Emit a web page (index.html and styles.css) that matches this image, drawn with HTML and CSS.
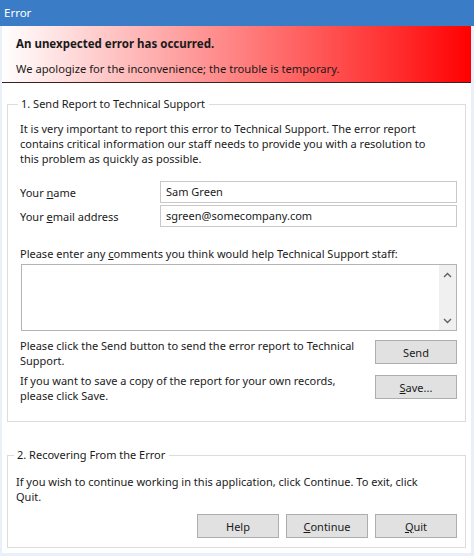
FILE: index.html
```html
<!DOCTYPE html>
<html lang="en">
<head>
    <meta charset="UTF-8">
    <meta name="viewport" content="width=device-width, initial-scale=1.0">
    <title>Error</title>
    <link rel="stylesheet" href="styles.css">
</head>
<body>

    <div class="window">
        <div class="titlebar">Error</div>

        <div class="banner">
            <div class="banner-title">An unexpected error has occurred.</div>
            <div class="banner-text">We apologize for the inconvenience; the trouble is temporary.</div>
        </div>

        <!-- 1. send report -->
        <fieldset class="group group-send">
            <legend>1. Send Report to Technical Support</legend>
            <p class="intro">It is very important to report this error to Technical Support. The error report contains critical information our staff needs to provide you with a resolution to this problem as quickly as possible.</p>

            <div class="field">
                <label>Your <u>n</u>ame</label>
                <div class="input">Sam Green</div>
            </div>
            <div class="field">
                <label>Your <u>e</u>mail address</label>
                <div class="input">sgreen@somecompany.com</div>
            </div>

            <div class="comments-label">Please enter any <u>c</u>omments you think would help Technical Support staff:</div>
            <div class="comments">
                <div class="comments-area"></div>
                <div class="scrollbar">
                    <svg width="9" height="6" viewBox="0 0 9 6"><path d="M1 5 L4.5 1.5 L8 5" fill="none" stroke="#606060" stroke-width="1.4"/></svg>
                    <svg width="9" height="6" viewBox="0 0 9 6"><path d="M1 1 L4.5 4.5 L8 1" fill="none" stroke="#606060" stroke-width="1.4"/></svg>
                </div>
            </div>

            <div class="action">
                <p>Please click the Send button to send the error report to Technical Support.</p>
                <button type="button">Send</button>
            </div>
            <div class="action">
                <p>If you want to save a copy of the report for your own records, please click Save.</p>
                <button type="button"><u>S</u>ave...</button>
            </div>
        </fieldset>

        <!-- 2. recovering -->
        <fieldset class="group group-recover">
            <legend>2. Recovering From the Error</legend>
            <p class="intro">If you wish to continue working in this application, click Continue. To exit, click Quit.</p>
            <div class="buttons">
                <button type="button">Help</button>
                <button type="button"><u>C</u>ontinue</button>
                <button type="button"><u>Q</u>uit</button>
            </div>
        </fieldset>
    </div>

</body>
</html>
```

FILE: styles.css
```css
body {
    font-family: "Noto Sans", "Open Sans", sans-serif;
    font-size: 11px;
    color: #1a1a1a;
    background-color: #ffffff;
    margin: 0;
    padding: 0;
}

.window {
    height: 556px;
    box-sizing: border-box;
    border-left: 2px solid #e9f0f9;
    border-right: 3px solid #e9f0f9;
    border-bottom: 3px solid #e9f0f9;
}

.titlebar {
    height: 26px;
    line-height: 26px;
    background-color: #3b7cc6;
    color: white;
    padding-left: 4px;
    margin: 0 -3px 0 -2px;
    font-size: 11.5px;
}

.banner {
    height: 57px;
    box-sizing: border-box;
    padding: 9px 14px 0;
    background: linear-gradient(to right, #ffffff, #ff2b2b 85%, #ff0000);
    border-bottom: 1px solid #3a2020;
}

.banner-title {
    font-weight: bold;
    font-size: 11.5px;
    line-height: 18px;
}

.banner-text {
    margin-top: 7px;
    font-size: 11.2px;
    line-height: 18px;
}

.group {
    margin: 13px 5px 0 5px;
    border: 1px solid #dcdcdc;
    padding: 0 8px 0 12px;
}

.group legend {
    padding: 0 4px 0 3px;
    margin-left: -2px;
    line-height: 16px;
}

.intro {
    margin: 9px 0 0;
    line-height: 15px;
}

.group-send .intro {
    margin-right: 18px;
}

.field {
    display: flex;
    align-items: center;
    margin-top: 2px;
}

.group-send .intro + .field {
    margin-top: 15px;
}

.field label {
    width: 140px;
}

.input {
    flex: 1;
    height: 22px;
    line-height: 20px;
    box-sizing: border-box;
    border: 1px solid #c8c8c8;
    padding: 0 5px;
}

.comments-label {
    margin-top: 19px;
    line-height: 16px;
}

.comments {
    display: flex;
    height: 67px;
    margin: 2px 0 0 1px;
    border: 1px solid #b4b4b4;
    box-sizing: border-box;
}

.comments-area {
    flex: 1;
}

.scrollbar {
    width: 17px;
    background-color: #f0f0f0;
    display: flex;
    flex-direction: column;
    justify-content: space-between;
    align-items: center;
    padding: 7px 0 6px;
}

.action {
    display: flex;
    justify-content: space-between;
    align-items: flex-start;
    margin-top: 5px;
}

.group-send .comments + .action {
    margin-top: 7px;
}

.action p {
    margin: 0;
    width: 345px;
    line-height: 15px;
}

.group-send .action:last-child {
    margin-bottom: 18px;
}

button {
    font-family: inherit;
    font-size: 11px;
    color: #1a1a1a;
    width: 82px;
    height: 24px;
    background-color: #e1e1e1;
    border: 1px solid #adadad;
    padding: 0;
}

.action button {
    margin-top: 2px;
}

.group-recover {
    margin-top: 25px;
    padding: 0 8px 9px 8px;
}

.group-recover .intro {
    margin-top: 11px;
    width: 425px;
}

.buttons {
    display: flex;
    justify-content: flex-end;
    gap: 7px;
    margin-top: 10px;
}
```
